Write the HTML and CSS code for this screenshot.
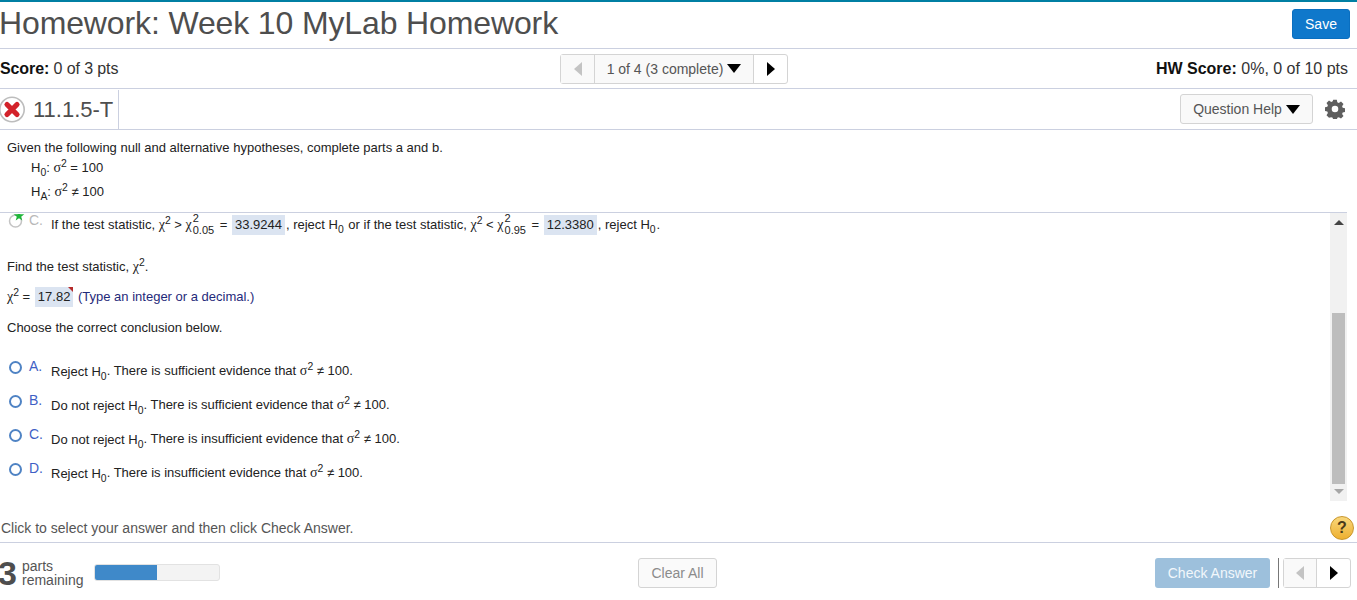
FILE: index.html
```html
<!DOCTYPE html>
<html lang="en">
<head>
<meta charset="utf-8">
<title>Homework: Week 10 MyLab Homework</title>
<link rel="stylesheet" href="styles.css">
</head>
<body>
<div class="page">
  <header class="title-row">
    <h1 class="title">Homework: Week 10 MyLab Homework</h1>
    <button class="btn-save">Save</button>
  </header>
  <div class="score-row">
    <div class="score-cell left"><b>Score:</b> 0 of 3 pts</div>
    <div class="pager">
      <span class="pager-arrow"><i class="tri-left dim"></i></span>
      <span class="pager-mid">1 of 4 (3 complete)<i class="tri-down"></i></span>
      <span class="pager-arrow"><i class="tri-right"></i></span>
    </div>
    <div class="score-cell right"><b>HW Score:</b> 0%, 0 of 10 pts</div>
  </div>
  <div class="question-row">
    <div class="qid">
      <svg class="x-icon" width="27" height="27" viewBox="0 0 27 27"><circle cx="13" cy="13.5" r="12.2" fill="#fff" stroke="#bdbdbd" stroke-width="1.6"/><path d="M8 8.500l10 10M18 8.500l-10 10" stroke="#d3222a" stroke-width="5.200" stroke-linecap="round"/></svg>
      <span class="qid-text">11.1.5-T</span>
    </div>
    <div class="qtools">
      <button class="btn-help">Question Help<i class="tri-down"></i></button>
      <svg class="gear" width="20" height="20" viewBox="0 0 20 20"><path fill="#5f5f5f" fill-rule="evenodd" d="M8.2 0.8h3.6l.5 2.5 1.5.7 2.2-1.4 2.5 2.5-1.4 2.2.6 1.5 2.5.5v3.6l-2.5.5-.6 1.5 1.4 2.2-2.5 2.5-2.2-1.4-1.5.6-.5 2.5H8.2l-.5-2.5-1.5-.6L4 18.700l-2.500-2.500 1.400-2.200-.6-1.500-2.500-.5V8.300l2.500-.5.600-1.500L1.500 4.100 4 1.600l2.200 1.400 1.500-.7zM10 6.700a3.300 3.300 0 1 0 0 6.600 3.300 3.300 0 0 0 0-6.600z"/></svg>
    </div>
  </div>
  <section class="stem">
    <p class="stem-intro">Given the following null and alternative hypotheses, complete parts a and b.</p>
    <p class="hyp">H<sub>0</sub>: <span class="sym">σ</span><sup>2</sup> = 100</p>
    <p class="hyp">H<sub>A</sub>: <span class="sym">σ</span><sup>2</sup> ≠ 100</p>
  </section>
  <div class="work">
    <main class="scroll-body">
      <div class="prev-choice">
        <span class="prev-mark">
          <svg width="18" height="15" viewBox="0 0 18 15"><circle cx="8.500" cy="7" r="6" fill="#fff" stroke="#c4c4c4" stroke-width="1.500"/><path fill="#1fb53a" d="M12 -3.500L13.400 .2 17.300 .3 14.200 2.700 15.300 6.500 12 4.300 8.700 6.500 9.800 2.700 6.700 .3 10.600 .2z"/></svg>
          <span class="prev-letter">C.</span>
        </span>
        <span class="choice-text">If the test statistic, <span class="sym">χ</span><sup>2</sup> &gt; <span class="stack"><span class="sym">χ</span><span class="stack-nums"><span>2</span><span>0.05</span></span></span> = <span class="ans">33.9244</span>, reject H<sub>0</sub> or if the test statistic, <span class="sym">χ</span><sup>2</sup> &lt; <span class="stack"><span class="sym">χ</span><span class="stack-nums"><span>2</span><span>0.95</span></span></span> = <span class="ans">12.3380</span>, reject H<sub>0</sub>.</span>
      </div>
      <p class="find">Find the test statistic, <span class="sym">χ</span><sup>2</sup>.</p>
      <p class="given"><span class="sym">χ</span><sup>2</sup> = <span class="ans flagged">17.82</span> <span class="hint">(Type an integer or a decimal.)</span></p>
      <p class="choose">Choose the correct conclusion below.</p>
      <ul class="options">
        <li class="option"><i class="radio"></i><span class="letter">A.</span><span class="opt-text">Reject H<sub>0</sub><span class="raised">. There is sufficient evidence that <span class="sym">σ</span><sup>2</sup> ≠ 100.</span></span></li>
        <li class="option"><i class="radio"></i><span class="letter">B.</span><span class="opt-text">Do not reject H<sub>0</sub><span class="raised">. There is sufficient evidence that <span class="sym">σ</span><sup>2</sup> ≠ 100.</span></span></li>
        <li class="option"><i class="radio"></i><span class="letter">C.</span><span class="opt-text">Do not reject H<sub>0</sub><span class="raised">. There is insufficient evidence that <span class="sym">σ</span><sup>2</sup> ≠ 100.</span></span></li>
        <li class="option"><i class="radio"></i><span class="letter">D.</span><span class="opt-text">Reject H<sub>0</sub><span class="raised">. There is insufficient evidence that <span class="sym">σ</span><sup>2</sup> ≠ 100.</span></span></li>
      </ul>
    </main>
    <div class="scrollbar">
      <i class="sb-up"></i>
      <div class="sb-space"></div>
      <div class="sb-thumb"></div>
      <i class="sb-down"></i>
    </div>
  </div>
  <div class="status-row">
    <span class="status-text">Click to select your answer and then click Check Answer.</span>
    <span class="help-dot">?</span>
  </div>
  <footer class="footer">
    <div class="parts">
      <span class="parts-num">3</span>
      <span class="parts-label">parts<br>remaining</span>
      <div class="progress"><div class="progress-fill"></div></div>
    </div>
    <button class="btn-clear">Clear All</button>
    <div class="foot-right">
      <button class="btn-check">Check Answer</button>
      <div class="foot-sep"></div>
      <div class="pager small">
        <span class="pager-arrow"><i class="tri-left dim"></i></span>
        <span class="pager-arrow"><i class="tri-right"></i></span>
      </div>
    </div>
  </footer>
</div>
</body>
</html>
```
FILE: styles.css
```css
* { box-sizing: border-box; }
html, body { margin: 0; padding: 0; }
body { font-family: "Liberation Sans", Arial, sans-serif; color: #222; background: #fff; overflow: hidden; }
.page { width: 1357px; height: 600px; display: flex; flex-direction: column; border-top: 2px solid #007fa3; }
button { font-family: inherit; cursor: pointer; }
i { display: inline-block; font-style: normal; }
p { margin: 0; }
sub, sup { font-size: 80%; line-height: 0; }
sup { vertical-align: 5px; }
sub { vertical-align: -4px; }
.sym { font-family: "Liberation Serif", "Times New Roman", serif; font-size: 14px; }

.title-row { height: 47px; flex: none; display: flex; justify-content: space-between; align-items: center; border-bottom: 1px solid #cbd0e0; padding-right: 7px; }
.title { margin: 0 0 3px -1px; font-size: 32px; font-weight: 400; letter-spacing: -0.13px; color: #4e4e4e; white-space: nowrap; }
.btn-save { width: 58px; height: 30px; margin-bottom: 2px; border: 1px solid #0a6fc0; border-radius: 3px; background: #0f78cb; color: #fff; font-size: 14px; padding: 0; }

.score-row { height: 40px; flex: none; display: grid; grid-template-columns: 1fr auto 1fr; align-items: center; border-bottom: 1px solid #cbd0e0; padding-right: 9px; font-size: 16px; color: #333; }
.score-cell b { color: #111; }
.score-cell.left { letter-spacing: -0.1px; }
.score-cell.right { text-align: right; }
.pager { display: flex; height: 30px; border: 1px solid #d4d4d4; border-radius: 3px; background: #fff; width: 228px; }
.pager-arrow { width: 33px; flex: none; display: flex; align-items: center; justify-content: center; }
.pager-arrow:first-child { background: #f9f9f9; }
.pager-mid { flex: 1; display: flex; align-items: center; justify-content: center; border: solid #d4d4d4; border-width: 0 1px; background: #f9f9f9; font-size: 14px; color: #555; }
.tri-left { border: 7px solid transparent; border-left: 0; border-right: 8px solid #000; }
.tri-right { border: 7px solid transparent; border-right: 0; border-left: 8px solid #000; }
.tri-left.dim { border-right-color: #c3c3c3; }
.tri-down { border: 7px solid transparent; border-bottom: 0; border-top: 9px solid #000; margin-left: 4px; }

.question-row { height: 41px; flex: none; display: flex; justify-content: space-between; border-bottom: 1px solid #cbd0e0; padding-right: 12px; }
.qid { display: flex; align-items: center; width: 119px; height: 39px; margin-top: 1px; border-right: 1px solid #cbd0e0; }
.x-icon { flex: none; margin-left: -1px; }
.qid-text { font-size: 22px; color: #4e4e4e; margin-left: 7px; white-space: nowrap; }
.qtools { display: flex; align-items: center; gap: 12px; }
.btn-help { width: 133px; height: 30px; border: 1px solid #d4d4d4; border-radius: 3px; background: #f9f9f9; color: #555; font-size: 14px; padding: 0; display: flex; align-items: center; justify-content: center; }

.stem { height: 83px; flex: none; border-bottom: 1px solid #cbd0e0; width: 1347px; padding: 10px 0 0 7px; font-size: 13px; color: #222; }
.stem-intro { line-height: 16px; }
.hyp { padding-left: 24px; line-height: 24px; }
.hyp:first-of-type { margin-top: 3px; }

.work { height: 288px; flex: none; display: flex; width: 1347px; }
.scroll-body { flex: 1; padding: 0 0 0 7px; font-size: 13px; color: #222; min-width: 0; }
.prev-choice { display: flex; height: 26px; }
.prev-mark { width: 44px; flex: none; display: flex; align-items: flex-start; padding-top: 1px; }
.prev-letter { color: #b9b9b9; font-size: 14px; line-height: 14px; margin: -1px 0 0 4px; }
.choice-text { white-space: nowrap; line-height: 21px; margin-top: -1px; }
.choice-text sub { margin-right: 1px; }
.stack { display: inline-flex; align-items: center; margin-right: 2px; }
.stack-nums { display: inline-flex; flex-direction: column; font-size: 11px; line-height: 12px; margin-left: 1px; }
.ans { display: inline-block; background: #dbe4f1; padding: 0 3px; margin: 0 1px; line-height: 20px; position: relative; }
.flagged::after { content: ""; position: absolute; right: 0; top: 0; border-top: 5px solid #b52a2a; border-left: 5px solid transparent; }
.find { margin-top: 18px; line-height: 20px; }
.given { margin-top: 9px; line-height: 21px; }
.hint { color: #1f2a7a; }
.choose { margin-top: 11px; line-height: 20px; }
.options { list-style: none; margin: 20px 0 0; padding: 0; }
.option { display: flex; height: 34px; align-items: flex-start; }
.radio { width: 13px; height: 13px; margin: 3px 0 0 2px; border: 2px solid #4f83c4; border-radius: 50%; flex: none; }
.letter { width: 22px; margin-left: 7px; color: #3f5fc5; font-size: 14px; line-height: 16px; flex: none; }
.opt-text { line-height: 20px; padding-top: 3px; white-space: nowrap; }
.raised { vertical-align: 1px; }

.scrollbar { width: 17px; flex: none; background: #f1f1f1; display: flex; flex-direction: column; align-items: center; }
.sb-up { border: 5px solid transparent; border-top: 0; border-bottom: 5px solid #444; margin-top: 7px; }
.sb-space { height: 88px; }
.sb-thumb { width: 13px; height: 171px; background: #bdbdbd; }
.sb-down { border: 5px solid transparent; border-bottom: 0; border-top: 5px solid #a6a6a6; margin-top: 5px; }

.status-row { height: 42px; flex: none; display: flex; justify-content: space-between; align-items: center; border-bottom: 1px solid #cbd0e0; padding: 12px 3px 0 1px; }
.status-text { font-size: 14px; color: #555; }
.help-dot { width: 24px; height: 24px; border-radius: 50%; background: linear-gradient(#f8d77c, #eeb030); border: 1px solid #c9962c; color: #4a3a1a; font-weight: 700; font-size: 16px; line-height: 22px; text-align: center; }

.footer { flex: 1; display: grid; grid-template-columns: 1fr auto 1fr; align-items: center; padding: 3px 6px 0 4px; }
.parts { display: flex; align-items: center; margin-left: -4px; }
.parts-num { font-size: 34px; font-weight: 700; color: #4e4e4e; width: 23px; margin-left: -2px; margin-right: 1px; }
.parts-label { font-size: 14px; line-height: 14px; color: #555; }
.progress { width: 126px; height: 17px; margin-left: 11px; margin-bottom: 1px; background: #f3f3f3; border: 1px solid #e2e2e2; border-radius: 3px; overflow: hidden; }
.progress-fill { width: 50%; height: 100%; background: #3f89c9; }
.btn-clear { width: 79px; height: 30px; border: 1px solid #d4d4d4; border-radius: 3px; background: #fafafa; color: #8b8b8b; font-size: 14px; padding: 0; }
.foot-right { display: flex; align-items: center; justify-content: flex-end; }
.btn-check { width: 115px; height: 30px; border: 0; border-radius: 3px; background: #9dc0dc; color: #f2f7fb; font-size: 14px; padding: 0; }
.foot-sep { width: 1px; height: 30px; background: #777; margin: 0 4px 0 8px; }
.pager.small { width: 68px; }
.pager.small .pager-arrow { width: 33px; }
.pager.small .pager-arrow:first-child { border-right: 1px solid #d4d4d4; }
```
